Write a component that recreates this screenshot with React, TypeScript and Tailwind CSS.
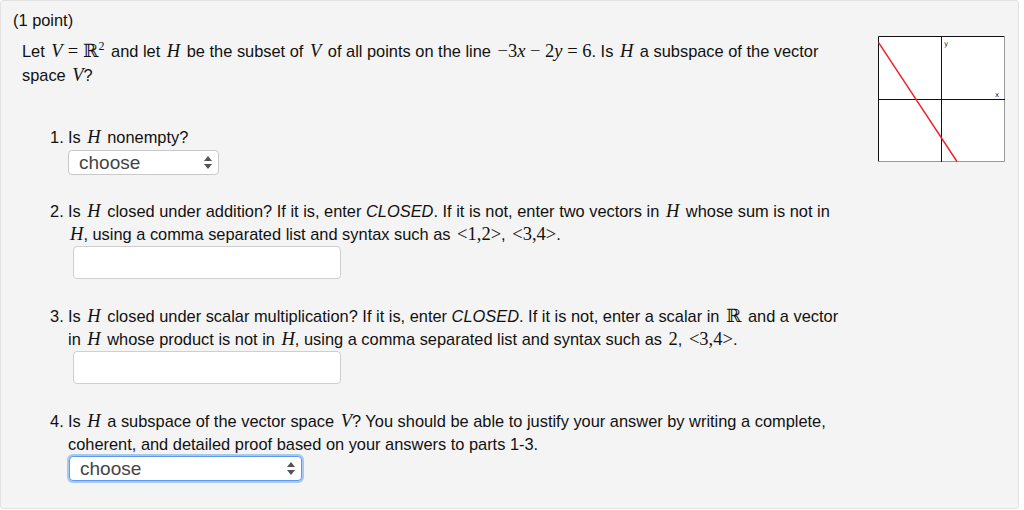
import React from 'react';

const M: React.FC<{ children: React.ReactNode; i?: boolean; tight?: boolean }> = ({
  children,
  i = true,
  tight = false,
}) => (
  <span
    className={`${tight ? 'ml-[2px]' : 'mx-[2px]'} font-['Liberation_Serif','DejaVu_Serif',serif] text-[18.5px] leading-none ${
      i ? 'italic' : ''
    }`}
  >
    {children}
  </span>
);

const Arrows: React.FC = () => (
  <svg width="8" height="13" viewBox="0 0 8 13" className="text-[#555]">
    <path d="M4 0 L8 5 L0 5 Z" fill="currentColor" />
    <path d="M0 8 L8 8 L4 13 Z" fill="currentColor" />
  </svg>
);

const Choose: React.FC<{ width: string; focused?: boolean }> = ({ width, focused }) => (
  <div
    className={`${width} h-[25px] flex items-center justify-between pl-[10px] pr-[6px] bg-white rounded-[4px] text-[19px] text-[#444] ${
      focused
        ? 'border border-[#5d9be6] shadow-[0_0_0_2px_#a6c8f3]'
        : 'border border-[#c9c9c9]'
    }`}
  >
    <span className="leading-none">choose</span>
    <Arrows />
  </div>
);

const TextBox: React.FC = () => (
  <div className="ml-[5px] w-[268px] h-[33px] bg-white border border-[#cfcfcf] rounded-[4px]" />
);

const Graph: React.FC = () => (
  <svg width="127" height="126" viewBox="0 0 127 126">
    <rect x="0.5" y="0.5" width="126" height="125" fill="white" />
    <line x1="0.5" y1="0.5" x2="126.5" y2="0.5" stroke="#111" />
    <line x1="0.5" y1="0.5" x2="0.5" y2="125.5" stroke="#111" />
    <line x1="126.5" y1="0.5" x2="126.5" y2="125.5" stroke="#999" />
    <line x1="0.5" y1="125.5" x2="126.5" y2="125.5" stroke="#999" />
    <line x1="63.5" y1="0" x2="63.5" y2="126" stroke="#111" />
    <line x1="0" y1="63.5" x2="127" y2="63.5" stroke="#111" />
    <line x1="0.5" y1="6.5" x2="79" y2="125.5" stroke="#f0202a" strokeWidth="1.4" />
    <text x="66" y="10" fontSize="7" fontFamily="DejaVu Sans Mono, monospace" fill="#222">y</text>
    <text x="117" y="61" fontSize="7" fontFamily="DejaVu Sans Mono, monospace" fill="#222">x</text>
  </svg>
);

const Item: React.FC<{ n: number; children: React.ReactNode }> = ({ n, children }) => (
  <div className="flex">
    <div className="w-[18px] shrink-0">{n}.</div>
    <div className="flex-1">{children}</div>
  </div>
);

export default function App() {
  return (
    <div className="w-[1024px] h-[510px] bg-white font-['Liberation_Sans',Arial,sans-serif] text-[16.4px] leading-[23px] text-[#111]">
      <div className="w-[1019px] h-[509px] bg-[#f4f4f4] border border-[#e2e2e2] rounded-[3px] pl-[12px] pr-[13px] pt-[8px]">
        <div>(1 point)</div>
        <div className="flex mt-[7px] ml-[9px]">
          <div className="flex-1 pr-[28px]">
            <div className="leading-[24px]">
              Let{' '}
              <M>
                V<span className="not-italic mx-[5px]">=</span>
                <span className="not-italic">ℝ</span>
                <sup className="not-italic text-[12px] align-super top-0">2</sup>
              </M>{' '}
              and let <M>H</M> be the subset of <M>V</M> of all points on the line{' '}
              <M i={false} tight>
                −3<i>x</i> − 2<i>y</i> = 6
              </M>
              . Is <M>H</M> a subspace of the vector space <M tight>V</M>?
            </div>

            <div className="ml-[28px] mt-[39px]">
              <Item n={1}>
                <div>
                  Is <M>H</M> nonempty?
                </div>
                <div className="mt-[1px]">
                  <Choose width="w-[151px]" />
                </div>
              </Item>

              <div className="mt-[25px]">
                <Item n={2}>
                  <div>
                    Is <M>H</M> closed under addition? If it is, enter <i>CLOSED</i>. If it is not, enter two
                    vectors in <M>H</M> whose sum is not in <M tight>H</M>, using a comma separated list and
                    syntax such as <M i={false} tight>&lt;1,2&gt;</M>, <M i={false} tight>&lt;3,4&gt;</M>.
                  </div>
                  <TextBox />
                </Item>
              </div>

              <div className="mt-[26px]">
                <Item n={3}>
                  <div>
                    Is <M>H</M> closed under scalar multiplication? If it is, enter <i>CLOSED</i>. If it is not,
                    enter a scalar in <M i={false}>ℝ</M> and a vector in <M>H</M> whose product is not in{' '}
                    <M tight>H</M>, using a comma separated list and syntax such as <M i={false} tight>2</M>,{' '}
                    <M i={false} tight>&lt;3,4&gt;</M>.
                  </div>
                  <TextBox />
                </Item>
              </div>

              <div className="mt-[26px]">
                <Item n={4}>
                  <div>
                    Is <M>H</M> a subspace of the vector space <M tight>V</M>? You should be able to justify
                    your answer by writing a complete, coherent, and detailed proof based on your answers to
                    parts 1-3.
                  </div>
                  <div className="ml-[1px]">
                    <Choose width="w-[233px]" focused />
                  </div>
                </Item>
              </div>
            </div>
          </div>
          <div className="shrink-0 -mt-[3px]">
            <Graph />
          </div>
        </div>
      </div>
    </div>
  );
}
